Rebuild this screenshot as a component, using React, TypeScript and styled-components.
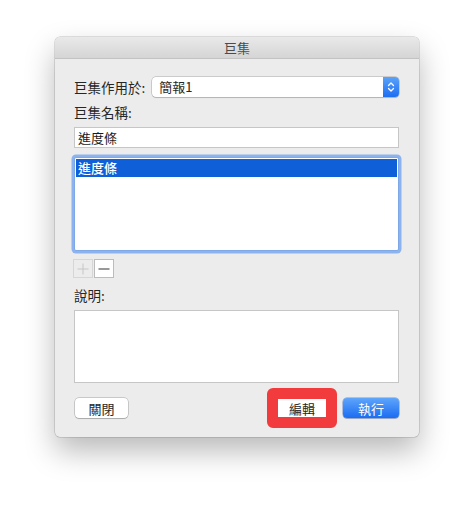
import React from "react";
import styled, { createGlobalStyle } from "styled-components";

const GlobalStyle = createGlobalStyle`
  html, body {
    margin: 0;
    padding: 0;
    background: #ffffff;
  }
  body {
    font-family: "Noto Sans CJK TC", "Noto Sans", "Liberation Sans", sans-serif;
    font-size: 13.5px;
    color: #262626;
  }
`;

const Page = styled.div`
  width: 474px;
  height: 511px;
  box-sizing: border-box;
  padding: 37px 0 0 55px;
`;

const Window = styled.div`
  width: 364px;
  height: 400px;
  background: #ececec;
  border-radius: 5px;
  overflow: hidden;
  display: flex;
  flex-direction: column;
  box-shadow: 0 14px 30px rgba(0, 0, 0, 0.28), 0 0 0 0.5px rgba(0, 0, 0, 0.22);
`;

const TitleBar = styled.div`
  height: 21px;
  flex: none;
  display: flex;
  align-items: center;
  justify-content: center;
  background: linear-gradient(#e9e9e9, #d5d5d5);
  border-bottom: 1px solid #c2c2c2;
  color: #4b4b4b;
  font-size: 13px;
  line-height: 21px;
`;

const Body = styled.div`
  flex: 1;
  display: flex;
  flex-direction: column;
  padding: 18px 20px 19px 19px;
`;

const Row = styled.div`
  display: flex;
  align-items: center;
  height: 20px;
`;

const Label = styled.div<{ $top?: number }>`
  height: 16px;
  line-height: 16px;
  margin-top: ${(p) => p.$top ?? 0}px;
  color: #262626;
  white-space: nowrap;
`;

const Select = styled.div`
  flex: 1;
  margin-left: 7px;
  height: 20px;
  display: flex;
  align-items: center;
  background: #ffffff;
  border-radius: 4px;
  box-shadow: 0 0 0 0.5px rgba(0, 0, 0, 0.28), 0 1px 1px rgba(0, 0, 0, 0.12);
  overflow: hidden;
`;

const SelectText = styled.span`
  flex: 1;
  padding-left: 7px;
  line-height: 20px;
  font-size: 13px;
`;

const Stepper = styled.div`
  width: 16px;
  height: 20px;
  display: flex;
  align-items: center;
  justify-content: center;
  background: linear-gradient(#5aa3fa, #1d6ef2);
`;

const TextField = styled.div`
  margin-top: 7px;
  height: 21px;
  box-sizing: border-box;
  background: #ffffff;
  border: 1px solid #c6c6c6;
  padding-left: 3px;
  line-height: 19px;
  font-size: 13px;
  color: #1a1a1a;
`;

const List = styled.div`
  margin-top: 9px;
  height: 94px;
  box-sizing: border-box;
  background: #ffffff;
  border: 1px solid #7ea8e6;
  box-shadow: 0 0 0 2.5px #8cb3ee;
  border-radius: 2px;
  padding: 1px;
`;

const ListRow = styled.div<{ $selected?: boolean }>`
  height: 18px;
  line-height: 18px;
  padding-left: 2px;
  font-size: 13px;
  font-weight: 500;
  background: ${(p) => (p.$selected ? "#0e5fd8" : "transparent")};
  color: ${(p) => (p.$selected ? "#ffffff" : "#1a1a1a")};
`;

const PlusMinus = styled.div`
  margin-top: 8px;
  display: flex;
  margin-left: -1px;
`;

const SquareButton = styled.div<{ $disabled?: boolean }>`
  width: 20px;
  height: 19px;
  box-sizing: border-box;
  display: flex;
  align-items: center;
  justify-content: center;
  background: ${(p) => (p.$disabled ? "#ececec" : "#ffffff")};
  border: 1px solid ${(p) => (p.$disabled ? "#d6d6d6" : "#bcbcbc")};
  & + & {
    margin-left: 1px;
  }
`;

const TextArea = styled.div`
  margin-top: 7px;
  height: 73px;
  box-sizing: border-box;
  background: #ffffff;
  border: 1px solid #c6c6c6;
`;

const ButtonRow = styled.div`
  margin-top: 15px;
  height: 20px;
  display: flex;
  align-items: center;
`;

const Button = styled.div<{ $width: number; $primary?: boolean }>`
  width: ${(p) => p.$width}px;
  height: 20px;
  display: flex;
  align-items: center;
  justify-content: center;
  border-radius: 4px;
  font-size: 13px;
  background: ${(p) =>
    p.$primary ? "linear-gradient(#5ea5fb, #1b6cf2)" : "#ffffff"};
  color: ${(p) => (p.$primary ? "#ffffff" : "#262626")};
  box-shadow: ${(p) =>
    p.$primary
      ? "0 0 0 0.5px rgba(0, 60, 180, 0.5), 0 1px 1px rgba(0, 0, 0, 0.15)"
      : "0 0 0 0.5px rgba(0, 0, 0, 0.3), 0 1px 1px rgba(0, 0, 0, 0.15)"};
`;

const Spacer = styled.div`
  flex: 1;
`;

const Highlight = styled.div`
  position: relative;
  margin-right: 16px;

  &::after {
    content: "";
    position: absolute;
    inset: -10px;
    border: 11px solid #f23b3d;
    border-radius: 6px;
    pointer-events: none;
  }
`;

const ChevronIcon = () => (
  <svg width="8" height="12" viewBox="0 0 8 12">
    <path
      d="M1.5 4.5 L4 2 L6.5 4.5 M1.5 7.5 L4 10 L6.5 7.5"
      stroke="#ffffff"
      strokeWidth="1.3"
      fill="none"
      strokeLinecap="round"
      strokeLinejoin="round"
    />
  </svg>
);

const PlusIcon = () => (
  <svg width="12" height="12" viewBox="0 0 12 12">
    <path d="M6 0.5 V11.5 M0.5 6 H11.5" stroke="#c6c6c6" strokeWidth="1" />
  </svg>
);

const MinusIcon = () => (
  <svg width="12" height="12" viewBox="0 0 12 12">
    <path d="M0.5 6 H11.5" stroke="#333333" strokeWidth="1.2" />
  </svg>
);

const App: React.FC = () => {
  return (
    <>
      <GlobalStyle />
      <Page>
        <Window>
          <TitleBar>巨集</TitleBar>
          <Body>
            <Row>
              <Label>巨集作用於:</Label>
              <Select>
                <SelectText>簡報1</SelectText>
                <Stepper>
                  <ChevronIcon />
                </Stepper>
              </Select>
            </Row>
            <Label $top={7}>巨集名稱:</Label>
            <TextField>進度條</TextField>
            <List>
              <ListRow $selected>進度條</ListRow>
            </List>
            <PlusMinus>
              <SquareButton $disabled>
                <PlusIcon />
              </SquareButton>
              <SquareButton>
                <MinusIcon />
              </SquareButton>
            </PlusMinus>
            <Label $top={9}>說明:</Label>
            <TextArea />
            <ButtonRow>
              <Button $width={53} style={{ marginLeft: 1 }}>
                關閉
              </Button>
              <Spacer />
              <Highlight>
                <Button $width={50}>編輯</Button>
              </Highlight>
              <Button $width={56} $primary>
                執行
              </Button>
            </ButtonRow>
          </Body>
        </Window>
      </Page>
    </>
  );
};

export default App;
